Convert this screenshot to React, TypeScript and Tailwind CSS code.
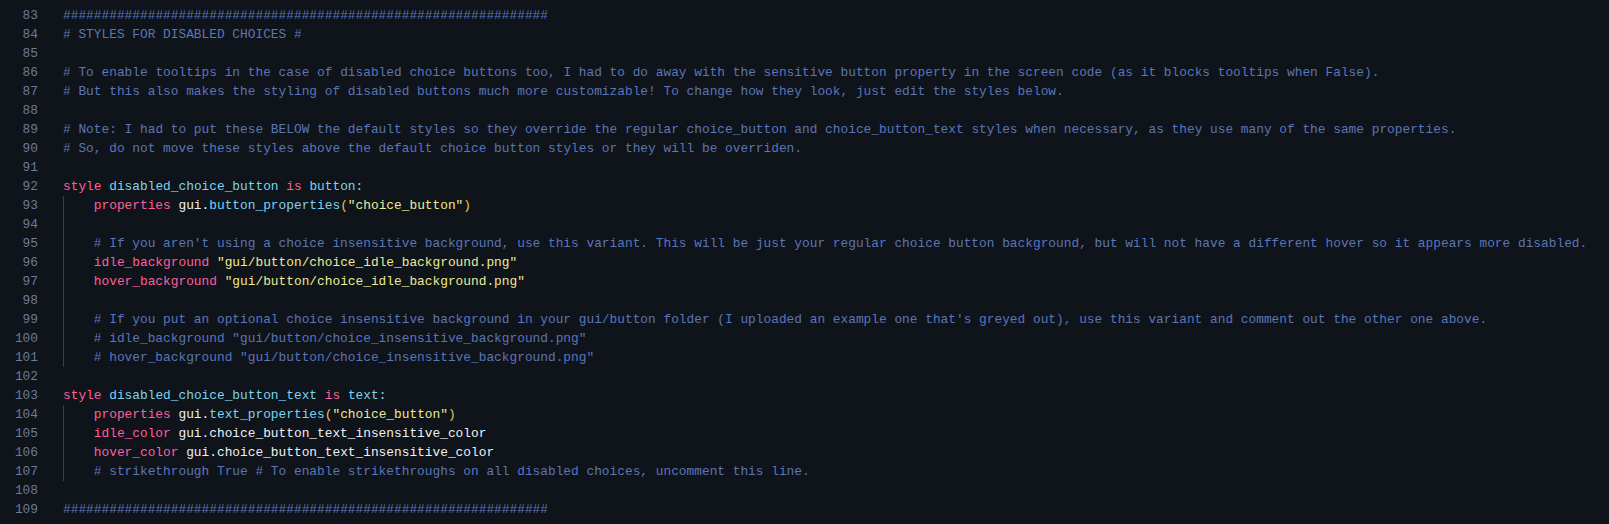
const C = 'text-[#5b76b8]'; // comment
const K = 'text-[#ff5f9e]'; // keyword / property
const N = 'text-[#7dd3f0]'; // name
const W = 'text-[#eef1f6]'; // plain
const S = 'text-[#ecec94]'; // string
const P = 'text-[#f2c14e]'; // paren

type Tok = [string, string];
type Row = { n: number; indent?: boolean; toks: Tok[] };

const hashes = '#'.repeat(63);

const rows: Row[] = [
  { n: 83, toks: [[C, hashes]] },
  { n: 84, toks: [[C, '# STYLES FOR DISABLED CHOICES #']] },
  { n: 85, toks: [] },
  {
    n: 86,
    toks: [[C, '# To enable tooltips in the case of disabled choice buttons too, I had to do away with the sensitive button property in the screen code (as it blocks tooltips when False).']],
  },
  {
    n: 87,
    toks: [[C, '# But this also makes the styling of disabled buttons much more customizable! To change how they look, just edit the styles below.']],
  },
  { n: 88, toks: [] },
  {
    n: 89,
    toks: [[C, '# Note: I had to put these BELOW the default styles so they override the regular choice_button and choice_button_text styles when necessary, as they use many of the same properties.']],
  },
  {
    n: 90,
    toks: [[C, '# So, do not move these styles above the default choice button styles or they will be overriden.']],
  },
  { n: 91, toks: [] },
  {
    n: 92,
    toks: [[K, 'style'], [W, ' '], [N, 'disabled_choice_button'], [W, ' '], [K, 'is'], [W, ' '], [N, 'button:']],
  },
  {
    n: 93,
    indent: true,
    toks: [[K, 'properties'], [W, ' gui.'], [N, 'button_properties'], [P, '('], [S, '"choice_button"'], [P, ')']],
  },
  { n: 94, indent: true, toks: [] },
  {
    n: 95,
    indent: true,
    toks: [[C, "# If you aren't using a choice insensitive background, use this variant. This will be just your regular choice button background, but will not have a different hover so it appears more disabled."]],
  },
  { n: 96, indent: true, toks: [[K, 'idle_background'], [W, ' '], [S, '"gui/button/choice_idle_background.png"']] },
  { n: 97, indent: true, toks: [[K, 'hover_background'], [W, ' '], [S, '"gui/button/choice_idle_background.png"']] },
  { n: 98, indent: true, toks: [] },
  {
    n: 99,
    indent: true,
    toks: [[C, "# If you put an optional choice insensitive background in your gui/button folder (I uploaded an example one that's greyed out), use this variant and comment out the other one above."]],
  },
  { n: 100, indent: true, toks: [[C, '# idle_background "gui/button/choice_insensitive_background.png"']] },
  { n: 101, indent: true, toks: [[C, '# hover_background "gui/button/choice_insensitive_background.png"']] },
  { n: 102, toks: [] },
  {
    n: 103,
    toks: [[K, 'style'], [W, ' '], [N, 'disabled_choice_button_text'], [W, ' '], [K, 'is'], [W, ' '], [N, 'text:']],
  },
  {
    n: 104,
    indent: true,
    toks: [[K, 'properties'], [W, ' gui.'], [N, 'text_properties'], [P, '('], [S, '"choice_button"'], [P, ')']],
  },
  { n: 105, indent: true, toks: [[K, 'idle_color'], [W, ' gui.choice_button_text_insensitive_color']] },
  { n: 106, indent: true, toks: [[K, 'hover_color'], [W, ' gui.choice_button_text_insensitive_color']] },
  {
    n: 107,
    indent: true,
    toks: [[C, '# strikethrough True # To enable strikethroughs on all disabled choices, uncomment this line.']],
  },
  { n: 108, toks: [] },
  { n: 109, toks: [[C, hashes]] },
];

function Line({ row }: { row: Row }) {
  return (
    <div className="flex h-[19px] leading-[19px]">
      <div className="w-[38px] shrink-0 text-right text-[#6b7b9c]">{row.n}</div>
      <div className="flex pl-[25px] whitespace-pre">
        {row.indent && <div className="w-[4ch] shrink-0 border-l border-[#3a404b]" />}
        <div>
          {row.toks.map((t, i) => (
            <span key={i} className={t[0]}>
              {t[1]}
            </span>
          ))}
        </div>
      </div>
    </div>
  );
}

export default function App() {
  return (
    <div className="min-h-screen w-full overflow-hidden bg-[#0f131a] pt-[6px] font-['Liberation_Mono',monospace] text-[12.83px]">
      {rows.map((r) => (
        <Line key={r.n} row={r} />
      ))}
    </div>
  );
}
